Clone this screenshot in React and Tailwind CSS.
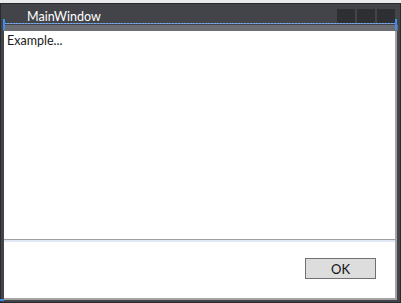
export default function App() {
  return (
    <div className="w-[401px] h-[303px] bg-[#ebebeb] pt-[3px] font-['Lato','Noto_Sans',sans-serif] overflow-hidden">
      <div className="relative h-[300px] border border-[#2a2a2d] bg-[#424449] flex flex-col">
        {/* title bar */}
        <div className="h-[21px] shrink-0 pl-[26px] pt-[6px]">
          <span className="block text-[12.5px] leading-[14px] text-white">MainWindow</span>
        </div>
        <div className="h-[6px] shrink-0 mx-[2px] bg-[#6c6e73]"></div>
        {/* content */}
        <div className="flex-1 flex flex-col ml-[3px] mr-[3px] mb-[2px] bg-white border-r-2 border-b-2 border-[#a3a3a3]">
          <div className="flex-1 border-b border-[#a0a0a0] pl-[3px] pt-[3px]">
            <span className="block text-[12.5px] leading-[14px] text-[#1a1a1a]">Example...</span>
          </div>
          <div className="h-[2px] bg-[#e1e8f5]"></div>
          <div className="h-[56px] flex justify-end items-start pt-[16px] pr-[19px]">
            <button className="w-[71px] h-[21px] bg-[#dddddd] border border-[#707070] text-[13px] leading-[14px] text-[#111]">
              OK
            </button>
          </div>
        </div>
        {/* overlays */}
        <div className="absolute right-[5px] top-[5px] flex gap-[2px]">
          <div className="w-[18px] h-[15px] bg-[#2e2f33]"></div>
          <div className="w-[18px] h-[15px] bg-[#2e2f33]"></div>
          <div className="w-[18px] h-[15px] bg-[#2e2f33]"></div>
        </div>
        <div className="absolute left-[3px] right-[4px] top-[19px] h-px bg-[repeating-linear-gradient(90deg,#6aaaf8_0px,#6aaaf8_2px,#7f8590_2px,#7f8590_3px)]"></div>
        <div className="absolute left-[2px] top-[15px] w-[2px] h-[11px] bg-[#3d8ee8]"></div>
        <div className="absolute right-[3px] top-[15px] w-[2px] h-[11px] bg-[#3d8ee8]"></div>
        <div className="absolute -left-px bottom-[1px] w-[4px] h-[2px] bg-[#3d8ee8]"></div>
      </div>
    </div>
  );
}
